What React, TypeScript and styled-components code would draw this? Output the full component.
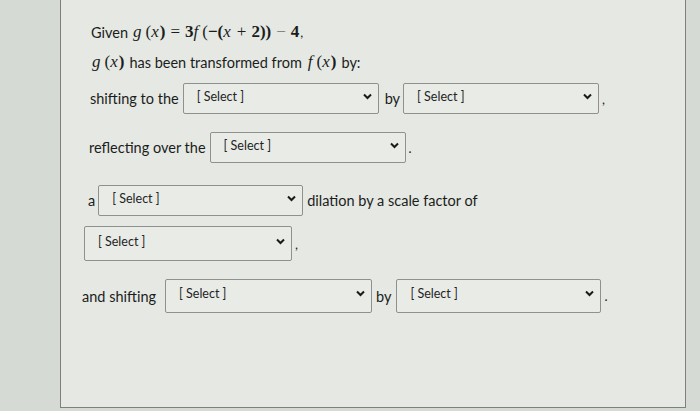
import * as React from 'react';
import styled, { createGlobalStyle } from 'styled-components';

const GlobalStyle = createGlobalStyle`
	html, body {
		margin: 0;
		padding: 0;
		background: #d6dad5;
		font-family: Lato, "Open Sans", sans-serif;
		color: #1b1d1c;
	}
`;

const Page = styled.div`
	width: 700px;
	height: 411px;
	overflow: hidden;
	padding-left: 60px;
	box-sizing: border-box;
`;

const Panel = styled.div`
	width: 626px;
	height: 408px;
	box-sizing: border-box;
	border: 1px solid #7d807c;
	border-top: none;
	background: #e5e8e3;
	padding-top: 20px;
	display: flex;
	flex-direction: column;
`;

const Line = styled.div<{ $top?: number; $indent: number }>`
	display: flex;
	align-items: center;
	margin-top: ${props => props.$top || 0}px;
	padding-left: ${props => props.$indent}px;
	font-size: 14.5px;
	height: 24px;
	white-space: nowrap;
`;

const Row = styled.div<{ $top: number; $indent: number }>`
	display: flex;
	align-items: center;
	margin-top: ${props => props.$top}px;
	padding-left: ${props => props.$indent}px;
	font-size: 14.5px;
	white-space: nowrap;
`;

const Word = styled.span<{ $left?: number; $right?: number }>`
	margin-left: ${props => props.$left ?? 0}px;
	margin-right: ${props => props.$right ?? 4}px;
`;

const Punct = styled.span<{ $left?: number }>`
	margin-left: ${props => props.$left ?? 3}px;
	font-size: 13px;
`;

const Math = styled.span<{ $left?: number }>`
	font-family: "Liberation Serif", "DejaVu Serif", serif;
	font-size: 17px;
	font-weight: bold;
	margin: 0 5px 0 ${props => props.$left ?? 5}px;
`;

const V = styled.i`
	font-style: italic;
	font-weight: normal;
	margin-right: 1px;
`;

const Op = styled.span<{ $faint?: boolean }>`
	margin: 0 5px;
	font-weight: normal;
	color: ${props => (props.$faint ? '#6d706c' : 'inherit')};
`;

const Paren = styled.span`
	margin-left: 3px;
	font-weight: normal;
`;

const SelectBox = styled.div<{ $w: number; $h?: number }>`
	width: ${props => props.$w}px;
	height: ${props => props.$h || 31}px;
	box-sizing: border-box;
	border: 1px solid #8e918d;
	border-radius: 2px;
	background: #e9ebe7;
	display: flex;
	align-items: center;
	justify-content: space-between;
	padding: 0 6px 5px 13px;
	flex-shrink: 0;
`;

const SelectLabel = styled.span`
	font-size: 12.5px;
	color: #222423;
`;

const Chevron = () => (
	<svg width="9" height="7" viewBox="0 0 9 7">
		<path d="M1 1.5 L4.5 5 L8 1.5" fill="none" stroke="#1a1a1a" strokeWidth="2" />
	</svg>
);

const Select: React.FC<{ w: number; h?: number }> = ({ w, h }) => (
	<SelectBox $w={w} $h={h}>
		<SelectLabel>[ Select ]</SelectLabel>
		<Chevron />
	</SelectBox>
);

export default function App() {
	return (
		<>
			<GlobalStyle />
			<Page>
				<Panel>
					<Line $indent={30}>
						<Word $right={0}>Given</Word>
						<Math>
							<V>g</V>
							<Paren>(</Paren>
							<V>x</V>)<Op>=</Op>3<V>f</V>
							<Paren>(</Paren>−(<V>x</V>
							<Op>+</Op>2))<Op $faint>−</Op>4
						</Math>
						<Punct $left={-4}>,</Punct>
					</Line>
					<Line $top={6} $indent={31}>
						<Math $left={0}>
							<V>g</V>
							<Paren>(</Paren>
							<V>x</V>)
						</Math>
						<Word>has been transformed from</Word>
						<Math $left={2}>
							<V>f</V>
							<Paren>(</Paren>
							<V>x</V>)
						</Math>
						<Word>by:</Word>
					</Line>
					<Row $top={9} $indent={29}>
						<Word>shifting to the</Word>
						<Select w={196} />
						<Word $left={6} $right={3}>by</Word>
						<Select w={196} />
						<Punct>,</Punct>
					</Row>
					<Row $top={18} $indent={28}>
						<Word>reflecting over the</Word>
						<Select w={196} />
						<Punct>.</Punct>
					</Row>
					<Row $top={22} $indent={27}>
						<Word $right={3}>a</Word>
						<Select w={205} />
						<Word $left={4}>dilation by a scale factor of</Word>
					</Row>
					<Row $top={10} $indent={23}>
						<Select w={208} h={35} />
						<Punct>,</Punct>
					</Row>
					<Row $top={18} $indent={21}>
						<Word $right={9}>and shifting</Word>
						<Select w={207} h={34} />
						<Word $left={4} $right={5}>by</Word>
						<Select w={205} h={34} />
						<Punct>.</Punct>
					</Row>
				</Panel>
			</Page>
		</>
	);
}
